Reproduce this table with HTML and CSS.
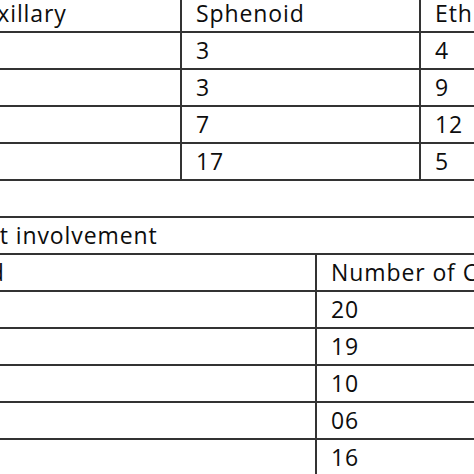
FILE: index.html
```html
<!DOCTYPE html>
<html lang="en">
<head>
<meta charset="utf-8">
<title>Sinus involvement tables</title>
<link rel="stylesheet" href="styles.css">
</head>
<body>
<div class="sheet">
  <table class="grid sites">
    <colgroup>
      <col class="col-max">
      <col class="col-sph">
      <col class="col-eth">
    </colgroup>
    <tr><th>Maxillary</th><th>Sphenoid</th><th>Ethmoid</th></tr>
    <tr><td></td><td>3</td><td>4</td></tr>
    <tr><td></td><td>3</td><td>9</td></tr>
    <tr><td></td><td>7</td><td>12</td></tr>
    <tr><td></td><td>17</td><td>5</td></tr>
  </table>

  <table class="grid extent">
    <colgroup>
      <col class="col-site">
      <col class="col-num">
    </colgroup>
    <tr><td class="title" colspan="2">Orbit involvement</td></tr>
    <tr><th>Structure involved</th><th>Number of Cases</th></tr>
    <tr><td></td><td>20</td></tr>
    <tr><td></td><td>19</td></tr>
    <tr><td></td><td>10</td></tr>
    <tr><td></td><td>06</td></tr>
    <tr><td></td><td>16</td></tr>
  </table>
</div>
</body>
</html>
```

FILE: styles.css
```css
html, body {
  margin: 0;
  padding: 0;
  background: #ffffff;
  overflow: hidden;
  width: 474px;
  height: 474px;
}

.sheet {
  font-family: "Open Sans", "Lato", "Liberation Sans", sans-serif;
  font-size: 23px;
  letter-spacing: 0.9px;
  color: #0d0d0d;
}

.grid {
  border-collapse: collapse;
  table-layout: fixed;
}

.grid th,
.grid td {
  height: 35px;
  padding: 0 0 0 14px;
  border: 2px solid #333333;
  text-align: left;
  font-weight: normal;
  white-space: nowrap;
  overflow: hidden;
  vertical-align: middle;
  line-height: 1;
}

.sites {
  margin-top: -6px;
  margin-left: -54px;
  width: 712px;
}

.col-max { width: 234px; }
.col-sph { width: 239px; }
.col-eth { width: 239px; }

.extent {
  margin-top: 35px;
  margin-left: -223px;
  width: 803px;
}

.col-site { width: 538px; }
.col-num { width: 265px; }

.extent .title {
  padding-left: 170px;
}
```
